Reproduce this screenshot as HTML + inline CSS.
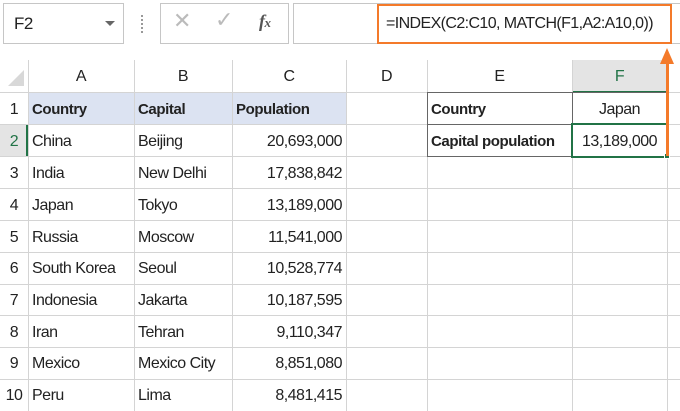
<!DOCTYPE html>
<html><head><meta charset="utf-8"><style>
body{margin:0;width:680px;height:411px;overflow:hidden;background:#fff;font-family:"Liberation Sans",sans-serif;font-size:16px;letter-spacing:-0.5px;color:#222;position:relative}
.a{position:absolute;box-sizing:border-box;white-space:nowrap}
.c{position:absolute;box-sizing:border-box;line-height:31px;white-space:nowrap;padding:0 4px}
.b{font-weight:bold;font-size:15px;letter-spacing:-0.4px}
.vl{position:absolute;width:1px;background:#d4d4d4;top:60px;height:351px}
.hl{position:absolute;height:1px;background:#d4d4d4;left:0;width:680px}
</style></head><body>
<div class="a" style="left:3px;top:3px;width:121px;height:41px;border:1px solid #c6c6c6;line-height:39px;padding-left:10px;font-size:17px">F2</div>
<div class="a" style="left:105px;top:21px;width:0;height:0;border-left:5px solid transparent;border-right:5px solid transparent;border-top:5px solid #666"></div>
<div class="a" style="left:141px;top:15px;width:2px;height:18px;border-left:2px dotted #999"></div>
<div class="a" style="left:160px;top:3px;width:129px;height:41px;border:1px solid #c6c6c6"></div>
<div class="a" style="left:173px;top:9px;font-size:22px;color:#bbb;font-family:'DejaVu Sans'">✕</div>
<div class="a" style="left:215px;top:8px;font-size:22px;color:#bbb;font-family:'DejaVu Sans'">✓</div>
<div class="a" style="left:259px;top:11px;font-size:18px;color:#555;font-family:'Liberation Serif';font-style:italic;font-weight:bold">f<span style="font-size:13px">x</span></div>
<div class="a" style="left:293px;top:3px;width:387px;height:41px;border:1px solid #c6c6c6;border-right:none"></div>
<div class="a" style="left:377px;top:4px;width:295px;height:40px;border:2px solid #f47a2a;background:#fff;line-height:36px;padding-left:7px;font-size:16px;letter-spacing:-0.6px;color:#222;overflow:hidden">=INDEX(C2:C10, MATCH(F1,A2:A10,0))</div>
<div class="a" style="left:572px;top:60px;width:96px;height:33px;background:#e4e4e4;border-bottom:2px solid #217346"></div>
<div class="a" style="left:0;top:124px;width:28px;height:32px;background:#e4e4e4;border-right:2px solid #217346"></div>
<div class="a" style="left:8px;top:70px;width:0;height:0;border-left:16px solid transparent;border-bottom:16px solid #d8d8d8"></div>
<div class="a" style="left:28px;top:93px;width:318px;height:32px;background:#dce3f2"></div>
<div class="vl" style="left:28px"></div><div class="vl" style="left:134px"></div><div class="vl" style="left:232px"></div><div class="vl" style="left:346px"></div><div class="vl" style="left:427px"></div><div class="vl" style="left:572px"></div><div class="vl" style="left:667px"></div>
<div class="hl" style="top:92px"></div><div class="hl" style="top:124px"></div><div class="hl" style="top:156px"></div><div class="hl" style="top:188px"></div><div class="hl" style="top:220px"></div><div class="hl" style="top:252px"></div><div class="hl" style="top:284px"></div><div class="hl" style="top:315px"></div><div class="hl" style="top:347px"></div><div class="hl" style="top:379px"></div>
<div class="c" style="left:28px;top:61px;width:106px;text-align:center">A</div>
<div class="c" style="left:134px;top:61px;width:98px;text-align:center">B</div>
<div class="c" style="left:232px;top:61px;width:114px;text-align:center">C</div>
<div class="c" style="left:346px;top:61px;width:81px;text-align:center">D</div>
<div class="c" style="left:427px;top:61px;width:145px;text-align:center">E</div>
<div class="c" style="left:572px;top:61px;width:95px;text-align:center;color:#217346">F</div>
<div class="a" style="left:427px;top:92px;width:241px;height:65px;border:1px solid #666"></div>
<div class="a" style="left:572px;top:92px;width:1px;height:65px;background:#666"></div>
<div class="a" style="left:427px;top:124px;width:145px;height:1px;background:#666"></div>
<div class="a" style="left:571px;top:123px;width:97px;height:35px;border:2px solid #217346"></div>
<div class="a" style="left:664px;top:153px;width:6px;height:6px;background:#217346;border:1px solid #fff"></div>
<div class="a" style="left:666px;top:62px;width:3px;height:94px;background:#f47a2a"></div>
<div class="a" style="left:660px;top:48px;width:0;height:0;border-left:7px solid transparent;border-right:7px solid transparent;border-bottom:16px solid #f47a2a"></div>
<div class="c" style="left:0;top:94px;width:28px;text-align:center">1</div>
<div class="c b" style="left:28px;top:94px">Country</div>
<div class="c b" style="left:134px;top:94px">Capital</div>
<div class="c b" style="left:232px;top:94px">Population</div>
<div class="c b" style="left:427px;top:94px">Country</div>
<div class="c" style="left:572px;top:94px;width:95px;text-align:center">Japan</div>
<div class="c b" style="left:427px;top:126px">Capital population</div>
<div class="c" style="left:572px;top:126px;width:95px;text-align:center">13,189,000</div>
<div class="c" style="left:0;top:126px;width:28px;text-align:center;color:#217346">2</div>
<div class="c" style="left:28px;top:126px">China</div><div class="c" style="left:134px;top:126px">Beijing</div><div class="c" style="left:232px;top:126px;width:114px;text-align:right">20,693,000</div>
<div class="c" style="left:0;top:158px;width:28px;text-align:center">3</div>
<div class="c" style="left:28px;top:158px">India</div><div class="c" style="left:134px;top:158px">New Delhi</div><div class="c" style="left:232px;top:158px;width:114px;text-align:right">17,838,842</div>
<div class="c" style="left:0;top:190px;width:28px;text-align:center">4</div>
<div class="c" style="left:28px;top:190px">Japan</div><div class="c" style="left:134px;top:190px">Tokyo</div><div class="c" style="left:232px;top:190px;width:114px;text-align:right">13,189,000</div>
<div class="c" style="left:0;top:222px;width:28px;text-align:center">5</div>
<div class="c" style="left:28px;top:222px">Russia</div><div class="c" style="left:134px;top:222px">Moscow</div><div class="c" style="left:232px;top:222px;width:114px;text-align:right">11,541,000</div>
<div class="c" style="left:0;top:253px;width:28px;text-align:center">6</div>
<div class="c" style="left:28px;top:253px">South Korea</div><div class="c" style="left:134px;top:253px">Seoul</div><div class="c" style="left:232px;top:253px;width:114px;text-align:right">10,528,774</div>
<div class="c" style="left:0;top:285px;width:28px;text-align:center">7</div>
<div class="c" style="left:28px;top:285px">Indonesia</div><div class="c" style="left:134px;top:285px">Jakarta</div><div class="c" style="left:232px;top:285px;width:114px;text-align:right">10,187,595</div>
<div class="c" style="left:0;top:317px;width:28px;text-align:center">8</div>
<div class="c" style="left:28px;top:317px">Iran</div><div class="c" style="left:134px;top:317px">Tehran</div><div class="c" style="left:232px;top:317px;width:114px;text-align:right">9,110,347</div>
<div class="c" style="left:0;top:348px;width:28px;text-align:center">9</div>
<div class="c" style="left:28px;top:348px">Mexico</div><div class="c" style="left:134px;top:348px">Mexico City</div><div class="c" style="left:232px;top:348px;width:114px;text-align:right">8,851,080</div>
<div class="c" style="left:0;top:380px;width:28px;text-align:center">10</div>
<div class="c" style="left:28px;top:380px">Peru</div><div class="c" style="left:134px;top:380px">Lima</div><div class="c" style="left:232px;top:380px;width:114px;text-align:right">8,481,415</div>
</body></html>
